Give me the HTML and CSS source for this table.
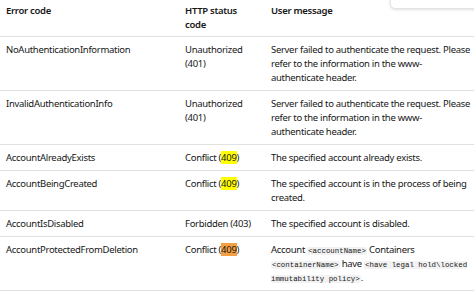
FILE: index.html
```html
<!DOCTYPE html>
<html lang="en">
<head>
    <meta charset="UTF-8">
    <meta name="viewport" content="width=device-width, initial-scale=1.0">
    <title>Error codes</title>
    <link rel="stylesheet" href="styles.css">
</head>
<body>
    <div class="popup"></div>
    <table class="codes">
        <thead>
            <tr>
                <th class="col-code">Error code</th>
                <th class="col-status">HTTP status code</th>
                <th class="col-msg">User message</th>
            </tr>
        </thead>
        <tbody>
            <tr>
                <td>NoAuthenticationInformation</td>
                <td>Unauthorized (401)</td>
                <td>Server failed to authenticate the request. Please refer to the information in the www-authenticate header.</td>
            </tr>
            <tr>
                <td>InvalidAuthenticationInfo</td>
                <td>Unauthorized (401)</td>
                <td>Server failed to authenticate the request. Please refer to the information in the www-authenticate header.</td>
            </tr>
            <tr>
                <td>AccountAlreadyExists</td>
                <td>Conflict (<mark>409</mark>)</td>
                <td>The specified account already exists.</td>
            </tr>
            <tr>
                <td>AccountBeingCreated</td>
                <td>Conflict (<mark>409</mark>)</td>
                <td>The specified account is in the process of being created.</td>
            </tr>
            <tr>
                <td>AccountIsDisabled</td>
                <td>Forbidden (403)</td>
                <td>The specified account is disabled.</td>
            </tr>
            <tr>
                <td>AccountProtectedFromDeletion</td>
                <td>Conflict (<mark class="current">409</mark>)</td>
                <td>Account <code>&lt;accountName&gt;</code> Containers <code>&lt;containerName&gt;</code> have <code>&lt;have legal hold\locked immutability policy&gt;</code>.</td>
            </tr>
        </tbody>
    </table>
</body>
</html>
```

FILE: styles.css
```css
body {
    margin: 0;
    font-family: "Noto Sans", "Open Sans", sans-serif;
    font-size: 9.5px;
    letter-spacing: -0.3px;
    line-height: 14px;
    color: #171717;
    background: #fff;
}

.popup {
    position: absolute;
    top: -4px;
    right: -4px;
    width: 86px;
    height: 11px;
    border: 1px solid #e3e3e3;
    border-radius: 0 0 0 5px;
    background: #fff;
    box-shadow: 0 1px 3px rgba(0, 0, 0, 0.12);
}

.codes {
    width: 100%;
    border-collapse: collapse;
    table-layout: fixed;
}

.codes th,
.codes td {
    text-align: left;
    vertical-align: top;
    padding: 6px 0 5px 6px;
    border-bottom: 1px solid #e1e1e1;
}

.codes th {
    font-weight: 600;
    padding-top: 4px;
    padding-bottom: 4px;
}

.col-code {
    width: 173px;
}

.col-status {
    width: 66px;
    padding-right: 14px !important;
}

mark {
    background: #ffff00;
    color: inherit;
}

mark.current {
    background: #f5a040;
}

code {
    font-family: "Liberation Mono", "DejaVu Sans Mono", monospace;
    font-size: 7.4px;
    letter-spacing: 0;
    line-height: 1;
    background: #f2f2f2;
    padding: 0 1px;
    border-radius: 2px;
}
```
